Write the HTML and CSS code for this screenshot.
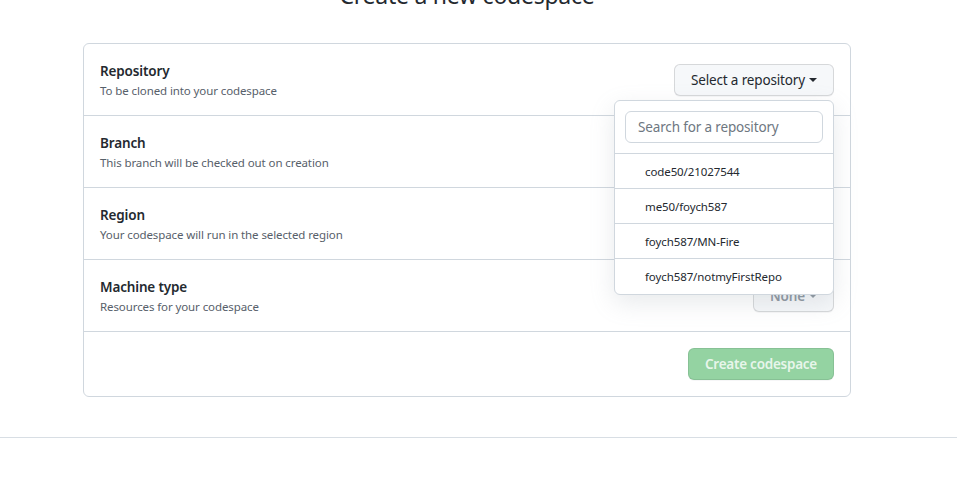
FILE: index.html
```html
<!DOCTYPE html>
<html lang="en">
<head>
<meta charset="utf-8">
<title>Create a new codespace</title>
<link rel="stylesheet" href="styles.css">
</head>
<body>
<div class="page">
  <h2 class="page-title">Create a new codespace</h2>
  <div class="card">
    <div class="row">
      <div class="label">
        <div class="label-title">Repository</div>
        <div class="label-desc">To be cloned into your codespace</div>
      </div>
      <div class="control">
        <button class="btn">Select a repository <span class="caret"></span></button>
        <div class="menu">
          <div class="menu-filter"><input class="menu-input" type="text" placeholder="Search for a repository"></div>
          <div class="menu-item">code50/21027544</div>
          <div class="menu-item">me50/foych587</div>
          <div class="menu-item">foych587/MN-Fire</div>
          <div class="menu-item">foych587/notmyFirstRepo</div>
        </div>
      </div>
    </div>
    <div class="row">
      <div class="label">
        <div class="label-title">Branch</div>
        <div class="label-desc">This branch will be checked out on creation</div>
      </div>
    </div>
    <div class="row">
      <div class="label">
        <div class="label-title">Region</div>
        <div class="label-desc">Your codespace will run in the selected region</div>
      </div>
    </div>
    <div class="row">
      <div class="label">
        <div class="label-title">Machine type</div>
        <div class="label-desc">Resources for your codespace</div>
      </div>
      <div class="control">
        <button class="btn btn-disabled">None <span class="caret"></span></button>
      </div>
    </div>
    <div class="footer">
      <button class="btn btn-primary">Create codespace</button>
    </div>
  </div>
</div>
<div class="divider"></div>
</body>
</html>
```

FILE: styles.css
```css
html, body {
  margin: 0;
  padding: 0;
  background: #ffffff;
  font-family: "Noto Sans", "Open Sans", sans-serif;
  color: #24292f;
  overflow: hidden;
}

.page {
  width: 768px;
  margin: 0 0 0 83px;
}

.page-title {
  margin: -20px 0 20px 0;
  height: 43px;
  line-height: 30px;
  font-size: 23px;
  letter-spacing: -0.25px;
  font-weight: 400;
  text-align: center;
  color: #24292f;
}

.card {
  border: 1px solid #d0d7de;
  border-radius: 6px;
  box-sizing: border-box;
  width: 768px;
}

.row {
  display: flex;
  align-items: center;
  justify-content: space-between;
  height: 72px;
  box-sizing: border-box;
  padding: 0 16px;
  border-bottom: 1px solid #d0d7de;
}

.label {
  padding-top: 2px;
}

.label-title {
  font-size: 13.5px;
  letter-spacing: -0.15px;
  font-weight: 600;
  line-height: 18px;
  color: #24292f;
}

.label-desc {
  margin-top: 2px;
  font-size: 11.5px;
  letter-spacing: -0.1px;
  line-height: 18px;
  color: #57606a;
}

.control {
  position: relative;
}

.btn {
  display: inline-flex;
  align-items: center;
  gap: 4px;
  height: 32px;
  padding: 0 16px;
  font-family: inherit;
  font-size: 13.5px;
  letter-spacing: -0.15px;
  font-weight: 400;
  color: #24292f;
  background: #f6f8fa;
  border: 1px solid rgba(31, 35, 40, 0.15);
  border-radius: 6px;
  box-shadow: 0 1px 0 rgba(31, 35, 40, 0.04);
}

.caret {
  display: inline-block;
  width: 0;
  height: 0;
  border-left: 4px solid transparent;
  border-right: 4px solid transparent;
  border-top: 4px solid currentColor;
}

.btn-disabled {
  color: #8c959f;
  font-weight: 600;
}

.btn-primary {
  color: rgba(255, 255, 255, 0.8);
  background: #94d3a2;
  border-color: rgba(31, 35, 40, 0.1);
  font-weight: 600;
  letter-spacing: -0.25px;
}

.footer {
  display: flex;
  justify-content: flex-end;
  align-items: center;
  height: 64px;
  padding: 0 16px;
}

.menu {
  position: absolute;
  top: 36px;
  right: 0;
  width: 220px;
  z-index: 10;
  background: #ffffff;
  border: 1px solid #d0d7de;
  border-radius: 6px;
  box-shadow: 0 8px 24px rgba(140, 149, 159, 0.2);
  box-sizing: border-box;
}

.menu-filter {
  padding: 10px;
  border-bottom: 1px solid #d0d7de;
}

.menu-input {
  box-sizing: border-box;
  width: 100%;
  height: 32px;
  padding: 0 12px;
  font-family: inherit;
  font-size: 13.5px;
  letter-spacing: -0.15px;
  color: #24292f;
  border: 1px solid #d0d7de;
  border-radius: 6px;
  outline: none;
}

.menu-input::placeholder {
  color: #6e7781;
}

.menu-item {
  height: 35px;
  line-height: 35px;
  box-sizing: border-box;
  padding-left: 30px;
  font-size: 11.5px;
  letter-spacing: -0.1px;
  color: #24292f;
  border-bottom: 1px solid #d0d7de;
}

.menu-item:last-child {
  border-bottom: none;
}

.divider {
  position: absolute;
  top: 437px;
  left: 0;
  width: 957px;
  height: 1px;
  background: #d8dee4;
}
```
